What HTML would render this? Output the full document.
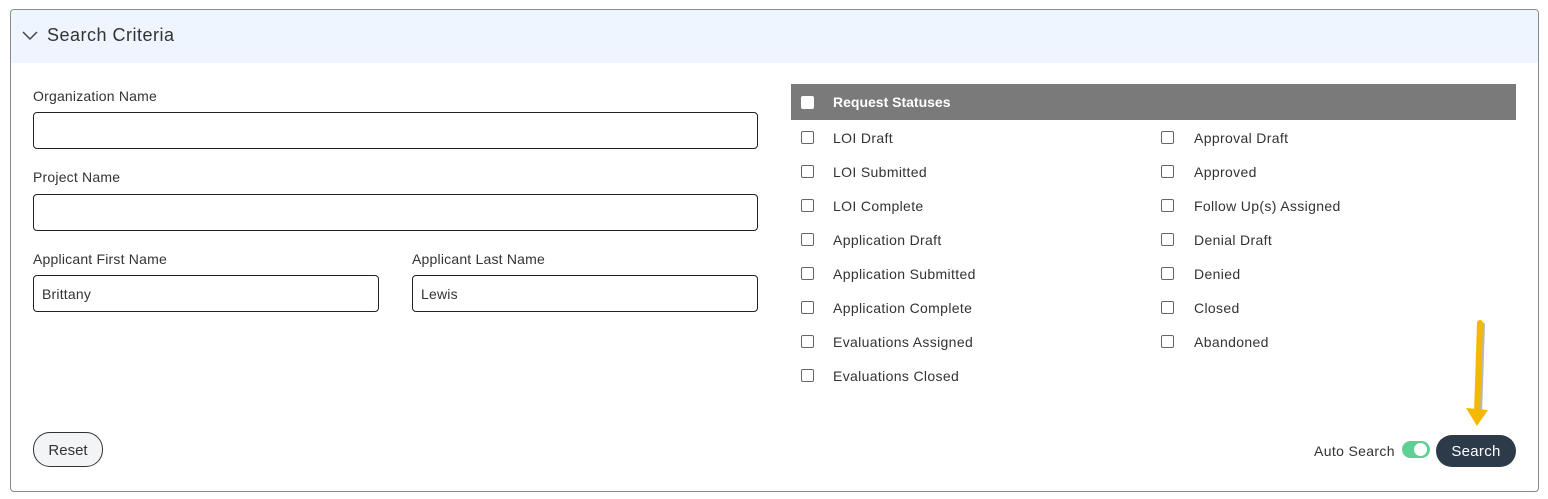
<!DOCTYPE html><html><head><style>
body{margin:0;width:1548px;height:499px;background:#fff;font-family:"Liberation Sans",sans-serif;color:#333;position:relative;overflow:hidden}
.a{position:absolute}
.panel{left:10px;top:9px;width:1527px;height:481px;border:1px solid #8a8a8a;border-radius:4px;overflow:hidden}
.hdr{left:0;top:0;width:1527px;height:53px;background:#eef5fe}
.lbl{font-size:14px;color:#333;letter-spacing:0.2px}
.inp{border:1px solid #222;border-radius:4px;box-sizing:border-box;height:37px;font-size:14px;padding:10px 8px;color:#333;letter-spacing:0.2px}
.cb{width:11px;height:11px;border:1px solid #666;border-radius:2px;background:#fff}
.t{font-size:14px;color:#333;letter-spacing:0.35px}
</style></head><body>
<div class="a panel"><div class="a hdr"></div></div>
<svg class="a" style="left:22px;top:31px" width="16" height="10"><path d="M1 1 L8 8 L15 1" fill="none" stroke="#444" stroke-width="1.5"/></svg>
<div class="a" style="left:47px;top:25px;font-size:18px;color:#333;letter-spacing:0.5px">Search Criteria</div>
<div class="a lbl" style="left:33px;top:88px">Organization Name</div>
<div class="a inp" style="left:33px;top:112px;width:725px"></div>
<div class="a lbl" style="left:33px;top:169px">Project Name</div>
<div class="a inp" style="left:33px;top:194px;width:725px"></div>
<div class="a lbl" style="left:33px;top:251px">Applicant First Name</div>
<div class="a inp" style="left:33px;top:275px;width:346px">Brittany</div>
<div class="a lbl" style="left:412px;top:251px">Applicant Last Name</div>
<div class="a inp" style="left:412px;top:275px;width:346px">Lewis</div>
<div class="a" style="left:791px;top:84px;width:725px;height:36px;background:#7a7a7a"></div>
<div class="a cb" style="left:801px;top:96px;border-color:#fff"></div>
<div class="a" style="left:833px;top:94px;font-size:14px;font-weight:bold;color:#fff">Request Statuses</div>
<div class="a cb" style="left:801px;top:131px"></div><div class="a t" style="left:833px;top:130px">LOI Draft</div>
<div class="a cb" style="left:801px;top:165px"></div><div class="a t" style="left:833px;top:164px">LOI Submitted</div>
<div class="a cb" style="left:801px;top:199px"></div><div class="a t" style="left:833px;top:198px">LOI Complete</div>
<div class="a cb" style="left:801px;top:233px"></div><div class="a t" style="left:833px;top:232px">Application Draft</div>
<div class="a cb" style="left:801px;top:267px"></div><div class="a t" style="left:833px;top:266px">Application Submitted</div>
<div class="a cb" style="left:801px;top:301px"></div><div class="a t" style="left:833px;top:300px">Application Complete</div>
<div class="a cb" style="left:801px;top:335px"></div><div class="a t" style="left:833px;top:334px">Evaluations Assigned</div>
<div class="a cb" style="left:801px;top:369px"></div><div class="a t" style="left:833px;top:368px">Evaluations Closed</div>
<div class="a cb" style="left:1161px;top:131px"></div><div class="a t" style="left:1194px;top:130px">Approval Draft</div>
<div class="a cb" style="left:1161px;top:165px"></div><div class="a t" style="left:1194px;top:164px">Approved</div>
<div class="a cb" style="left:1161px;top:199px"></div><div class="a t" style="left:1194px;top:198px">Follow Up(s) Assigned</div>
<div class="a cb" style="left:1161px;top:233px"></div><div class="a t" style="left:1194px;top:232px">Denial Draft</div>
<div class="a cb" style="left:1161px;top:267px"></div><div class="a t" style="left:1194px;top:266px">Denied</div>
<div class="a cb" style="left:1161px;top:301px"></div><div class="a t" style="left:1194px;top:300px">Closed</div>
<div class="a cb" style="left:1161px;top:335px"></div><div class="a t" style="left:1194px;top:334px">Abandoned</div>
<div class="a" style="left:33px;top:432px;width:68px;height:33px;border:1px solid #333;border-radius:17px;background:#f3f4f6;font-size:15px;text-align:center;line-height:35px">Reset</div>
<div class="a t" style="left:1314px;top:443px">Auto Search</div>
<div class="a" style="left:1402px;top:441px;width:28px;height:17px;border-radius:9px;background:#5ecf95"></div>
<div class="a" style="left:1414px;top:443px;width:13px;height:13px;border-radius:7px;background:#fff"></div>
<div class="a" style="left:1436px;top:435px;width:80px;height:32px;border-radius:16px;background:#2c3a4a;color:#fff;font-size:15px;text-align:center;line-height:34px;letter-spacing:0.3px">Search</div>
<svg class="a" style="left:1460px;top:318px" width="40" height="112"><path d="M20 5 L17 95" stroke="#333" stroke-opacity=".35" stroke-width="6" stroke-linecap="round" transform="translate(2,2)"/><path d="M20 5 L17 95" stroke="#f5b800" stroke-width="6" stroke-linecap="round"/><path d="M6 90 L17 108 L28 92 Z" fill="#f5b800"/></svg>
</body></html>
